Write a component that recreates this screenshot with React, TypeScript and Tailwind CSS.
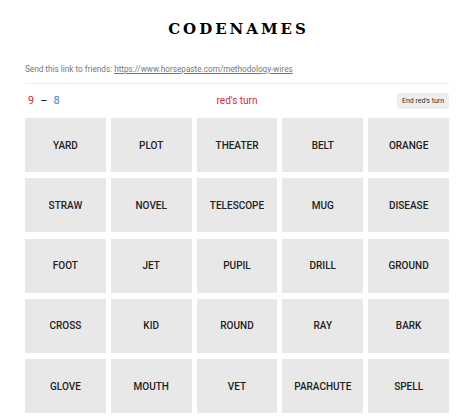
import React from 'react';

const WORDS = [
  'YARD', 'PLOT', 'THEATER', 'BELT', 'ORANGE',
  'STRAW', 'NOVEL', 'TELESCOPE', 'MUG', 'DISEASE',
  'FOOT', 'JET', 'PUPIL', 'DRILL', 'GROUND',
  'CROSS', 'KID', 'ROUND', 'RAY', 'BARK',
  'GLOVE', 'MOUTH', 'VET', 'PARACHUTE', 'SPELL',
];

export default function App() {
  return (
    <div className="min-h-screen bg-white" style={{ fontFamily: 'Roboto, "Liberation Sans", sans-serif' }}>
      <div className="mx-auto w-[424px]">
        <div className="pt-[19px] h-[60px] text-center">
          <h1
            className="text-[15px] font-bold leading-[20px] tracking-[3px] pl-[3px] text-black"
            style={{ fontFamily: '"DejaVu Serif", "Liberation Serif", serif' }}
          >
            CODENAMES
          </h1>
        </div>

        <div className="h-[18px] flex items-center text-[8.2px] text-[#777]">
          Send this link to friends:&nbsp;
          <span className="underline">https://www.horsepaste.com/methodology-wires</span>
        </div>

        <div className="mt-[5px] h-px bg-[#eeeeee]" />

        <div className="h-[34px] flex items-center justify-between">
          <div className="w-[80px] pl-[3px] text-[11px] flex items-center gap-[6px]">
            <span className="text-[#d4273e]">9</span>
            <span className="text-black">–</span>
            <span className="text-[#3a7bd5]">8</span>
          </div>
          <div className="text-[10px] text-[#d4273e] -mt-[2px]">red's turn</div>
          <div className="w-[80px] flex justify-end">
            <button className="h-[16px] w-[52px] rounded-[3px] bg-[#eeeeee] text-[7px] text-[#333]">
              End red's turn
            </button>
          </div>
        </div>

        <div className="grid grid-cols-5 gap-x-[5px] gap-y-[6.3px]">
          {WORDS.map((w) => (
            <div
              key={w}
              className="h-[54px] bg-[#e8e8e8] flex items-center justify-center text-[10px] font-medium text-[#222]"
            >
              {w}
            </div>
          ))}
        </div>
      </div>
    </div>
  );
}
